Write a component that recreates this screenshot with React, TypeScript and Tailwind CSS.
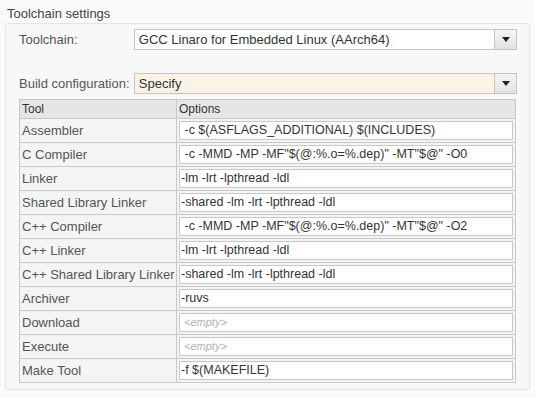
import React from "react";

const rows: { tool: string; value: string }[] = [
  { tool: "Assembler", value: " -c $(ASFLAGS_ADDITIONAL) $(INCLUDES)" },
  { tool: "C Compiler", value: ' -c -MMD -MP -MF"$(@:%.o=%.dep)" -MT"$@" -O0' },
  { tool: "Linker", value: "-lm -lrt -lpthread -ldl" },
  { tool: "Shared Library Linker", value: "-shared -lm -lrt -lpthread -ldl" },
  { tool: "C++ Compiler", value: ' -c -MMD -MP -MF"$(@:%.o=%.dep)" -MT"$@" -O2' },
  { tool: "C++ Linker", value: "-lm -lrt -lpthread -ldl" },
  { tool: "C++ Shared Library Linker", value: "-shared -lm -lrt -lpthread -ldl" },
  { tool: "Archiver", value: "-ruvs" },
  { tool: "Download", value: "" },
  { tool: "Execute", value: "" },
  { tool: "Make Tool", value: "-f $(MAKEFILE)" },
];

const Caret = () => (
  <svg width="8" height="5" viewBox="0 0 8 5">
    <path d="M0 0h8L4 5z" fill="#222" />
  </svg>
);

const Select: React.FC<{ value: string; tint?: boolean }> = ({ value, tint }) => (
  <div className="flex h-[21px] w-[384px] border border-[#c4c4c4]">
    <div
      className={`flex-1 flex items-center pl-[4px] text-[13px] text-[#333] ${
        tint ? "bg-[#fcf2e6]" : "bg-white"
      }`}
    >
      {value}
    </div>
    <div className="flex w-[22px] items-center justify-center border-l border-[#c4c4c4] bg-gradient-to-b from-[#f6f6f6] to-[#e2e2e2]">
      <Caret />
    </div>
  </div>
);

export default function App() {
  return (
    <div
      className="w-[535px] h-[398px] bg-[#fafafa] px-[5px] pt-[4px] text-[13px] text-[#444]"
      style={{ fontFamily: '"Liberation Sans", Arial, sans-serif' }}
    >
      <div className="h-[19px] pl-[2px] leading-[19px] text-[#444]">Toolchain settings</div>

      <div className="h-[367px] rounded-[3px] border border-[#e4e4e4] bg-[#f8f8f8] pl-[13px] pr-[12px] pt-[5px]">
        <div className="flex items-center">
          <div className="w-[115px] text-[13px] text-[#555] pt-[1px]">Toolchain:</div>
          <Select value="GCC Linaro for Embedded Linux (AArch64)" />
        </div>

        <div className="mt-[23px] flex items-center">
          <div className="w-[115px] text-[13px] text-[#555] pt-[1px]">Build configuration:</div>
          <Select value="Specify" tint />
        </div>

        <table className="mt-[5px] w-[497px] border-collapse border border-[#c8c8c8]">
          <thead>
            <tr className="h-[18px] bg-[#e6e6e6]">
              <th className="w-[157px] border border-[#c8c8c8] pl-[2px] text-left text-[12px] font-normal text-[#333]">
                Tool
              </th>
              <th className="border border-[#c8c8c8] pl-[2px] text-left text-[12px] font-normal text-[#333]">
                Options
              </th>
            </tr>
          </thead>
          <tbody>
            {rows.map((r) => (
              <tr key={r.tool} className="h-[24px]">
                <td className="whitespace-nowrap border border-[#c8c8c8] bg-[#f4f4f4] pl-[2px] text-[13px] text-[#555]">
                  {r.tool}
                </td>
                <td className="border border-[#c8c8c8] bg-[#f4f4f4] p-[2px]">
                  <div className="flex h-[19px] items-center border border-[#c8c8c8] bg-white pl-[1px]">
                    {r.value ? (
                      <span className="whitespace-pre text-[12.5px] text-[#333]">{r.value}</span>
                    ) : (
                      <span className="pl-[3px] text-[11px] italic text-[#b0b0b0]">&lt;empty&gt;</span>
                    )}
                  </div>
                </td>
              </tr>
            ))}
          </tbody>
        </table>
      </div>
    </div>
  );
}
